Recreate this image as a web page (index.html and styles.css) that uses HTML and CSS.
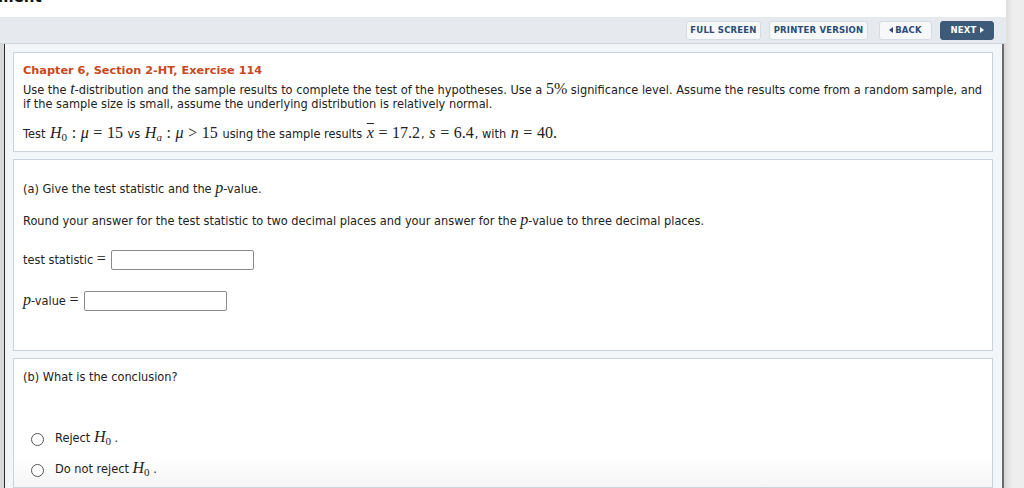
FILE: index.html
```html
<!DOCTYPE html>
<html>
<head>
<meta charset="utf-8">
<link rel="stylesheet" href="styles.css">
</head>
<body>
<div class="page">
  <div class="main">
    <div class="top"><span class="cut">ment</span></div>
    <div class="header">
      <span class="btn b-full">FULL SCREEN</span>
      <span class="btn b-print">PRINTER VERSION</span>
      <span class="btn back"><span class="tri-l"></span>BACK</span>
      <span class="btn next">NEXT<span class="tri-r"></span></span>
    </div>
    <div class="body">
      <div class="content">
        <div class="panel p1">
          <div class="title">Chapter 6, Section 2-HT, Exercise 114</div>
          <p class="intro">Use the <i class="m">t</i>-distribution and the sample results to complete the test of the hypotheses. Use a <span class="m">5%</span> significance level. Assume the results come from a random sample, and if the sample size is small, assume the underlying distribution is relatively normal.</p>
          <p class="test">Test <span class="m"><i>H</i><sub>0</sub><span class="op">:</span><i>μ</i><span class="op">=</span>15</span> vs <span class="m"><i>H</i><sub><i>a</i></sub><span class="op">:</span><i>μ</i><span class="op">&gt;</span>15</span> using the sample results <span class="m"><i class="xbar">x</i><span class="op">=</span>17.2</span>, <span class="m"><i>s</i><span class="op">=</span>6.4</span>, with <span class="m"><i>n</i><span class="op">=</span>40.</span></p>
        </div>
        <div class="panel p2">
          <p class="qa">(a) Give the test statistic and the <i class="m">p</i>-value.</p>
          <p class="round">Round your answer for the test statistic to two decimal places and your answer for the <i class="m">p</i>-value to three decimal places.</p>
          <div class="field f1"><span>test statistic <span class="m">=</span></span><span class="inp"></span></div>
          <div class="field f2"><span><i class="m">p</i>-value <span class="m">=</span></span><span class="inp"></span></div>
        </div>
        <div class="panel p3">
          <p class="qb">(b) What is the conclusion?</p>
          <div class="opt o1"><span class="radio"></span><span>Reject <span class="m"><i>H</i><sub>0</sub></span> .</span></div>
          <div class="opt o2"><span class="radio"></span><span>Do not reject <span class="m"><i>H</i><sub>0</sub></span> .</span></div>
        </div>
      </div>
    </div>
  </div>
  <div class="rstrip"></div>
</div>
</body>
</html>
```
FILE: styles.css
```css
html, body {
  margin: 0;
  padding: 0;
  height: 488px;
  overflow: hidden;
  background: #fff;
}
body {
  font-family: "DejaVu Sans", Verdana, sans-serif;
  font-size: 11.38px;
  color: #222;
}
.page {
  display: flex;
  height: 488px;
}
.main {
  width: 1006px;
  display: flex;
  flex-direction: column;
}
.rstrip {
  flex: 1;
  background: linear-gradient(to right, #dedede, #efefef 40%, #ececec);
}
.top {
  height: 17px;
  overflow: hidden;
  background: #fff;
}
.cut {
  display: block;
  font-weight: bold;
  font-size: 15px;
  line-height: 15px;
  margin-top: -10px;
  margin-left: -2px;
  color: #111;
}
.header {
  height: 26px;
  background: #e6eaee;
  border-bottom: 1px solid #cdd5de;
  display: flex;
  align-items: center;
  justify-content: flex-end;
  padding-right: 12px;
  gap: 8px;
}
.btn {
  display: flex;
  align-items: center;
  justify-content: center;
  box-sizing: border-box;
  height: 19px;
  background: #f6f8fa;
  border: 1px solid #d5dce3;
  border-radius: 3px;
  color: #2c4b77;
  font-weight: bold;
  font-size: 8.5px;
  letter-spacing: 0.2px;
}
.b-full { width: 75px; }
.b-print { width: 99px; }
.back { width: 53px; margin-left: 3px; }
.next {
  width: 54px;
  background: #3d5a79;
  border-color: #3d5a79;
  color: #fff;
}
.tri-l {
  width: 0; height: 0;
  border-top: 3px solid transparent;
  border-bottom: 3px solid transparent;
  border-right: 4px solid #2c4b77;
  margin-right: 2px;
}
.tri-r {
  width: 0; height: 0;
  border-top: 3px solid transparent;
  border-bottom: 3px solid transparent;
  border-left: 4px solid #fff;
  margin-left: 3px;
}
.body {
  flex: 1;
  display: flex;
  background: #d9d9d9;
  padding-left: 4px;
  padding-right: 2px;
}
.content {
  flex: 1;
  background: #f3f6f9;
  border-left: 1px solid #2e2e2e;
  border-right: 2px solid #6b6b6b;
  padding: 8px 9px 0 8px;
  display: flex;
  flex-direction: column;
  gap: 7px;
}
.panel {
  background: #fff;
  border: 1px solid #c9d3de;
  padding: 0 9px;
}
p { margin: 0; }
.m {
  font-family: "Liberation Serif", "Times New Roman", serif;
  font-size: 16px;
  line-height: 10px;
}
.m sub { font-size: 11px; vertical-align: -3px; font-style: normal; line-height: 1; }
.op { padding: 0 4.6px; }
.test .m { margin: 0 1px; }
.xbar { text-decoration: overline; }
.p1 { height: 98px; }
.title {
  margin-top: 10px;
  color: #c9471d;
  font-weight: bold;
  font-size: 11.3px;
  line-height: 15px;
}
.intro { margin-top: 5px; line-height: 14px; }
.test { margin-top: 14px; line-height: 18px; }
.p2 { height: 190px; }
.qa { margin-top: 22px; line-height: 14px; }
.round { margin-top: 18px; line-height: 14px; }
.field {
  display: flex;
  align-items: center;
  gap: 5px;
}
.f1 { margin-top: 22px; }
.f2 { margin-top: 21px; }
.inp {
  width: 141px;
  height: 18px;
  border: 1px solid #8b8b8b;
  border-radius: 2px;
  background: #fff;
}
.p3 {
  flex: 1;
  background: linear-gradient(to bottom, #fff 0, #fff 100px, #f4f4f4 130px);
}
.qb { margin-top: 11px; line-height: 14px; }
.opt {
  display: flex;
  align-items: center;
  gap: 11px;
  padding-left: 8px;
}
.o1 { margin-top: 47px; }
.o2 { margin-top: 15px; }
.radio {
  width: 11px;
  height: 11px;
  border: 1px solid #555;
  border-radius: 50%;
  background: #fff;
}
```
